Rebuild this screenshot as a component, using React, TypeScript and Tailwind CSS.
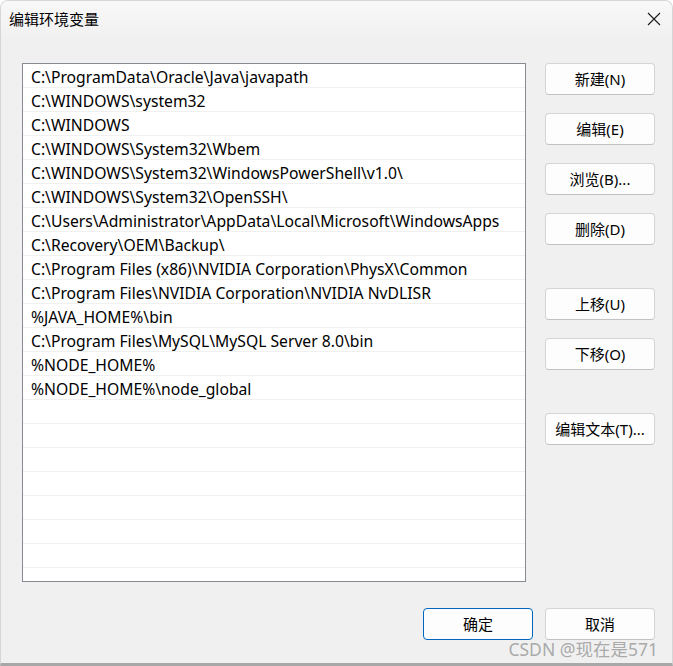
import React from 'react';

const paths = [
  'C:\\ProgramData\\Oracle\\Java\\javapath',
  'C:\\WINDOWS\\system32',
  'C:\\WINDOWS',
  'C:\\WINDOWS\\System32\\Wbem',
  'C:\\WINDOWS\\System32\\WindowsPowerShell\\v1.0\\',
  'C:\\WINDOWS\\System32\\OpenSSH\\',
  'C:\\Users\\Administrator\\AppData\\Local\\Microsoft\\WindowsApps',
  'C:\\Recovery\\OEM\\Backup\\',
  'C:\\Program Files (x86)\\NVIDIA Corporation\\PhysX\\Common',
  'C:\\Program Files\\NVIDIA Corporation\\NVIDIA NvDLISR',
  '%JAVA_HOME%\\bin',
  'C:\\Program Files\\MySQL\\MySQL Server 8.0\\bin',
  '%NODE_HOME%',
  '%NODE_HOME%\\node_global',
];

const rows = [...paths, ...Array(8).fill('')];

function Btn({ label, primary }: { label: string; primary?: boolean }) {
  return (
    <button
      className={
        'w-[110px] h-[32px] rounded-[4px] bg-[#fdfdfd] text-[15px] text-black flex items-center justify-center ' +
        (primary
          ? 'border border-[#0067c0]'
          : 'border border-[#d5d5d5] border-b-[#c2c2c2]')
      }
    >
      {label}
    </button>
  );
}

export default function App() {
  return (
    <div
      className="relative w-[673px] h-[666px] bg-[#f0f0f0] rounded-t-[8px] border-t border-x border-[#d6d6d6] border-b-[3px] border-b-[#a8a8a8] overflow-hidden"
      style={{ fontFamily: '"Segoe UI", "Noto Sans", "Noto Sans CJK SC", sans-serif' }}
    >
      <div className="h-[36px] flex items-center justify-between pl-[8px] pr-[10px] bg-gradient-to-b from-[#f8f8f8] to-[#f1f1f1]">
        <span className="text-[15px] text-black">编辑环境变量</span>
        <svg width="14" height="14" viewBox="0 0 14 14" className="mr-[1px]">
          <path d="M1 1 L13 13 M13 1 L1 13" stroke="#1a1a1a" strokeWidth="1.1" fill="none" />
        </svg>
      </div>

      <div className="flex pl-[21px] pt-[26px] gap-[19px]">
        <div className="w-[504px] h-[519px] border border-[#868a91] bg-white overflow-hidden">
          {rows.map((p, i) => (
            <div
              key={i}
              className="h-[24px] border-b border-[#f0f0f0] pl-[8px] pt-[4px] flex items-center text-[15.7px] text-black leading-none whitespace-nowrap"
            >
              {p}
            </div>
          ))}
        </div>

        <div className="flex flex-col">
          <div className="flex flex-col gap-[18px]">
            <Btn label="新建(N)" />
            <Btn label="编辑(E)" />
            <Btn label="浏览(B)..." />
            <Btn label="删除(D)" />
          </div>
          <div className="flex flex-col gap-[18px] mt-[43px]">
            <Btn label="上移(U)" />
            <Btn label="下移(O)" />
          </div>
          <div className="mt-[43px]">
            <Btn label="编辑文本(T)..." />
          </div>
        </div>
      </div>

      <div className="flex justify-end gap-[12px] pr-[17px] mt-[26px]">
        <Btn label="确定" primary />
        <Btn label="取消" />
      </div>

      <div className="absolute right-[14px] bottom-[5px] text-[17.5px] text-[#a0a0a0]/90 leading-none">
        CSDN @现在是571
      </div>
    </div>
  );
}
